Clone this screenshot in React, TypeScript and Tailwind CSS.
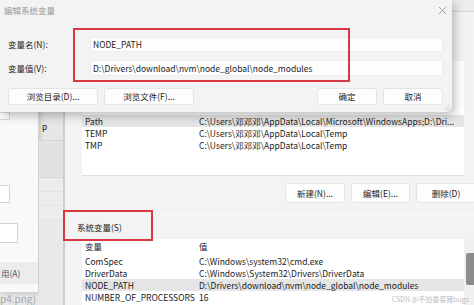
import React from "react";

type EnvVar = {
  name: string;
  value: string;
  selected?: boolean;
};

const userVars: EnvVar[] = [
  { name: "Path", value: "C:\\Users\\邓邓邓\\AppData\\Local\\Microsoft\\WindowsApps;D:\\Dri...", selected: true },
  { name: "TEMP", value: "C:\\Users\\邓邓邓\\AppData\\Local\\Temp" },
  { name: "TMP", value: "C:\\Users\\邓邓邓\\AppData\\Local\\Temp" },
];

const systemVars: EnvVar[] = [
  { name: "ComSpec", value: "C:\\Windows\\system32\\cmd.exe" },
  { name: "DriverData", value: "C:\\Windows\\System32\\Drivers\\DriverData" },
  { name: "NODE_PATH", value: "D:\\Drivers\\download\\nvm\\node_global\\node_modules", selected: true },
  { name: "NUMBER_OF_PROCESSORS", value: "16" },
];

const VarRow = ({ item }: { item: EnvVar }) => (
  <div className={`flex h-[12px] items-center leading-none ${item.selected ? "bg-[#e5e5e5]" : ""}`}>
    <span className="w-[117px] shrink-0 pl-[3px]">{item.name}</span>
    <span className="whitespace-nowrap">{item.value}</span>
  </div>
);

const WinButton = ({ label, className }: { label: string; className: string }) => (
  <button className={`flex shrink-0 items-center justify-center rounded-[3px] border border-[#e4e4e4] bg-[#fdfdfd] leading-none text-[#222] ${className}`}>
    {label}
  </button>
);

const App = () => {
  return (
    <div className="relative h-[305px] w-[474px] overflow-hidden bg-[#f3f3f3] font-['Noto_Sans_CJK_SC','Noto_Sans',sans-serif] text-[8.5px] text-[#222]">
      <div className="flex h-full">
        {/* windows behind, on the left */}
        <div className="relative flex w-[63px] shrink-0 bg-[#e6e6e6]">
          <div className="flex h-[292px] w-[39px] shrink-0 flex-col border-r border-[#d2d2d2] bg-[#f9f9f9] shadow-[2px_2px_4px_rgba(0,0,0,0.12)]">
            <div className="h-[112px]" />
            <div className="h-[8px] w-[10px] border border-l-0 border-[#dadada] bg-white" />
            <div className="h-[65px]" />
            <div className="h-[18px] w-[10px] border border-l-0 border-[#d4d4d4] bg-white" />
            <div className="h-[20px]" />
            <div className="h-[20px] w-[18px] border border-l-0 border-[#d4d4d4] bg-white" />
            <div className="h-[19px]" />
            <div className="flex h-[22px] items-center bg-[#ececec] pl-[1px] text-[#555]">
              <span className="whitespace-nowrap">用(A)</span>
            </div>
          </div>
          <div className="flex flex-1 flex-col">
            <div className="h-[112px]" />
            <div className="flex h-[29px] items-center border-b border-[#d6d6d6] pl-[3px] leading-none">p</div>
            <div className="h-[37px] border-b border-[#d6d6d6] bg-[#e2e2e2]" />
            <div className="h-[14px] border-b border-[#e4e4e4] bg-[#ececec]" />
            <div className="h-[14px] border-b border-[#e4e4e4] bg-[#ececec]" />
            <div className="h-[14px] border-b border-[#e4e4e4] bg-[#ececec]" />
            <div className="flex-1 bg-[#e9e9e9]" />
          </div>
          <div className="absolute bottom-0 left-0 flex h-[13px] items-center text-[10px] leading-none text-[#a8a8a8]">
            p4.png)
          </div>
        </div>
        <div className="w-[2px] shrink-0 bg-[#cdcdcd]" />

        {/* environment variables window */}
        <div className="flex flex-1 flex-col">
          <div className="h-[12px] border-b border-[#d4d4d4] bg-[#ececec]" />
          <div className="h-[49px]" />
          <div className="ml-[17px] flex h-[115px] w-[382px] flex-col border-b border-[#dedede] bg-white pt-[54px]">
            {userVars.map((item) => (
              <VarRow key={item.name} item={item} />
            ))}
          </div>
          <div className="ml-[220px] mt-[7px] flex h-[20px] gap-[6px]">
            <WinButton label="新建(N)..." className="w-[60px]" />
            <WinButton label="编辑(E)..." className="w-[59px]" />
            <WinButton label="删除(D)" className="w-[60px]" />
          </div>
          <div className="mt-[11px] h-[1px] bg-[#fafafa]" />
          <div className="flex h-[24px] items-center pl-[12px] leading-none">系统变量(S)</div>
          <div className="flex flex-1">
            <div className="ml-[17px] flex w-[382px] flex-col bg-white pt-[1px]">
              <div className="flex h-[13px] items-center leading-none">
                <span className="w-[117px] shrink-0 pl-[3px]">变量</span>
                <span>值</span>
              </div>
              <div className="h-[2px]" />
              {systemVars.map((item) => (
                <VarRow key={item.name} item={item} />
              ))}
            </div>
            <div className="flex flex-1 flex-col bg-[#f0f0f0] pl-[2px]">
              <div className="h-[14px]" />
              <div className="h-[32px] rounded-l-[2px] bg-[#8c8c8c]" />
            </div>
          </div>
        </div>
      </div>

      {/* edit dialog on top */}
      <div className="absolute left-0 top-0 flex h-[112px] w-[452px] flex-col rounded-br-[6px] bg-[#f3f3f3] pr-[9px] shadow-[3px_4px_10px_rgba(0,0,0,0.25)]">
        <div className="flex h-[20px] items-center justify-between pl-[4px] pr-[4px]">
          <span className="text-[8.5px] leading-none text-[#9a9a9a]">编辑系统变量</span>
          <svg width="9" height="9" viewBox="0 0 9 9" className="mr-[-8px]">
            <path d="M1 1 L8 8 M8 1 L1 8" stroke="#9a9a9a" strokeWidth="0.9" fill="none" />
          </svg>
        </div>
        <div className="mt-[17px] flex h-[15px] items-center pl-[8px]">
          <span className="w-[82px] shrink-0 leading-none">变量名(N):</span>
          <div className="flex h-full flex-1 items-center rounded-[2px] border border-[#ececec] bg-[#fdfdfd] pl-[2px] leading-none">
            NODE_PATH
          </div>
        </div>
        <div className="mt-[8px] flex h-[16px] items-center pl-[8px]">
          <span className="w-[82px] shrink-0 leading-none">变量值(V):</span>
          <div className="flex h-full flex-1 items-center rounded-[2px] border border-[#ececec] bg-[#fdfdfd] pl-[2px] leading-none">
            D:\Drivers\download\nvm\node_global\node_modules
          </div>
        </div>
        <div className="mt-[12px] flex h-[17px] items-stretch pl-[8px]">
          <WinButton label="浏览目录(D)..." className="w-[90px]" />
          <WinButton label="浏览文件(F)..." className="ml-[6px] w-[90px]" />
          <div className="flex-1" />
          <WinButton label="确定" className="w-[60px]" />
          <WinButton label="取消" className="ml-[6px] w-[60px]" />
        </div>
        <svg width="6" height="6" viewBox="0 0 6 6" className="absolute bottom-[2px] right-[2px]">
          <circle cx="5" cy="1" r="0.6" fill="#b5b5b5" />
          <circle cx="3" cy="3" r="0.6" fill="#b5b5b5" />
          <circle cx="5" cy="3" r="0.6" fill="#b5b5b5" />
          <circle cx="1" cy="5" r="0.6" fill="#b5b5b5" />
          <circle cx="3" cy="5" r="0.6" fill="#b5b5b5" />
          <circle cx="5" cy="5" r="0.6" fill="#b5b5b5" />
        </svg>
      </div>

      {/* red annotation boxes */}
      <div className="absolute left-[73px] top-[28px] h-[54px] w-[277px] border-[2px] border-[#d63a40]" />
      <div className="absolute left-[63px] top-[210px] h-[31px] w-[90px] border-[2px] border-[#d63a40]" />

      {/* watermark */}
      <div className="absolute bottom-[2px] right-[5px] text-[7px] leading-none text-[#bdbdbd]">
        CSDN @不怕香菜猪bugs
      </div>
    </div>
  );
};

export default App;
